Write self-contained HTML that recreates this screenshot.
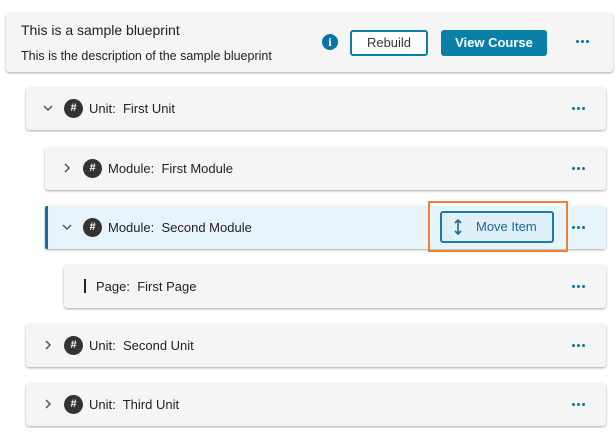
<!DOCTYPE html>
<html><head><style>
body{margin:0;width:616px;height:440px;background:#fff;font-family:"Liberation Sans",sans-serif;position:relative;overflow:hidden}
.card{position:absolute;background:#f5f5f5;border-radius:3px;box-shadow:0 1px 2px rgba(0,0,0,.35);height:43px;right:10px}
.lbl{position:absolute;top:14px;font-size:13px;color:#222;white-space:nowrap}
.hash{position:absolute;top:12px;width:19px;height:19px;border-radius:50%;background:#333;color:#fff;font-size:11px;font-weight:bold;text-align:center;line-height:19px}
.chev{position:absolute;top:15px;width:12px;height:12px}
.dots{position:absolute;right:20px;top:20px;width:14px;height:4px}
.dots i{position:absolute;top:0;width:3px;height:3px;border-radius:50%;background:#0a73a4}
</style></head><body>
<div class="card" style="left:6px;top:13px;height:59px;right:3px">
 <div style="position:absolute;left:15px;top:9px;font-size:14px;color:#222">This is a sample blueprint</div>
 <div style="position:absolute;left:15px;top:36px;font-size:12.5px;color:#222">This is the description of the sample blueprint</div>
 <div style="position:absolute;left:316px;top:21px;width:16px;height:16px;border-radius:50%;background:#0a73a4;color:#fff;font-weight:bold;font-size:12px;text-align:center;line-height:16px;font-family:'Liberation Serif',serif">i</div>
 <div style="position:absolute;left:344px;top:17px;width:74px;height:22px;border:2px solid #0a7fa8;border-radius:3px;background:#fff;color:#333;font-size:13px;text-align:center;line-height:22px">Rebuild</div>
 <div style="position:absolute;left:435px;top:17px;width:106px;height:26px;border-radius:3px;background:#0a7fa8;color:#fff;font-size:13px;font-weight:bold;text-align:center;line-height:26px">View Course</div>
 <div class="dots" style="right:23px;top:27px"><i style="left:0"></i><i style="left:5px"></i><i style="left:10px"></i></div>
</div>

<div class="card" style="left:26px;top:87px">
 <svg class="chev" style="left:16px" viewBox="0 0 12 12"><path d="M2 4l4 4 4-4" stroke="#555" stroke-width="1.5" fill="none"/></svg>
 <div class="hash" style="left:38px">#</div><div class="lbl" style="left:63px">Unit:&nbsp; First Unit</div>
 <div class="dots"><i style="left:0"></i><i style="left:5px"></i><i style="left:10px"></i></div>
</div>
<div class="card" style="left:45px;top:147px">
 <svg class="chev" style="left:16px" viewBox="0 0 12 12"><path d="M4 2l4 4-4 4" stroke="#555" stroke-width="1.5" fill="none"/></svg>
 <div class="hash" style="left:38px">#</div><div class="lbl" style="left:63px">Module:&nbsp; First Module</div>
 <div class="dots"><i style="left:0"></i><i style="left:5px"></i><i style="left:10px"></i></div>
</div>
<div class="card" style="left:45px;top:206px;background:#e8f4fb;border-left:3px solid #0a73a4;border-radius:2px">
 <svg class="chev" style="left:13px" viewBox="0 0 12 12"><path d="M2 4l4 4 4-4" stroke="#555" stroke-width="1.5" fill="none"/></svg>
 <div class="hash" style="left:35px">#</div><div class="lbl" style="left:60px">Module:&nbsp; Second Module</div>
 <div class="dots"><i style="left:0"></i><i style="left:5px"></i><i style="left:10px"></i></div>
</div>
<div style="position:absolute;left:428px;top:201px;width:136px;height:47px;border:2px solid #f08030"></div>
<div style="position:absolute;left:440px;top:211px;width:110px;height:28px;border:2px solid #1a7ca6;border-radius:3px;background:#dff0f8;color:#1a6a94;font-size:13px;line-height:28px">
 <svg style="position:absolute;left:12px;top:6px" width="8" height="16" viewBox="0 0 8 16"><path d="M4 1v14M1 4l3-3 3 3M1 12l3 3 3-3" stroke="#1a6a94" stroke-width="1.6" fill="none"/></svg>
 <span style="position:absolute;left:34px">Move Item</span></div>
<div class="card" style="left:64px;top:265px">
 <div style="position:absolute;left:20px;top:14px;width:2px;height:14px;background:#222"></div>
 <div class="lbl" style="left:32px">Page:&nbsp; First Page</div>
 <div class="dots"><i style="left:0"></i><i style="left:5px"></i><i style="left:10px"></i></div>
</div>
<div class="card" style="left:26px;top:324px">
 <svg class="chev" style="left:16px" viewBox="0 0 12 12"><path d="M4 2l4 4-4 4" stroke="#555" stroke-width="1.5" fill="none"/></svg>
 <div class="hash" style="left:38px">#</div><div class="lbl" style="left:63px">Unit:&nbsp; Second Unit</div>
 <div class="dots"><i style="left:0"></i><i style="left:5px"></i><i style="left:10px"></i></div>
</div>
<div class="card" style="left:26px;top:383px">
 <svg class="chev" style="left:16px" viewBox="0 0 12 12"><path d="M4 2l4 4-4 4" stroke="#555" stroke-width="1.5" fill="none"/></svg>
 <div class="hash" style="left:38px">#</div><div class="lbl" style="left:63px">Unit:&nbsp; Third Unit</div>
 <div class="dots"><i style="left:0"></i><i style="left:5px"></i><i style="left:10px"></i></div>
</div>
</body></html>
